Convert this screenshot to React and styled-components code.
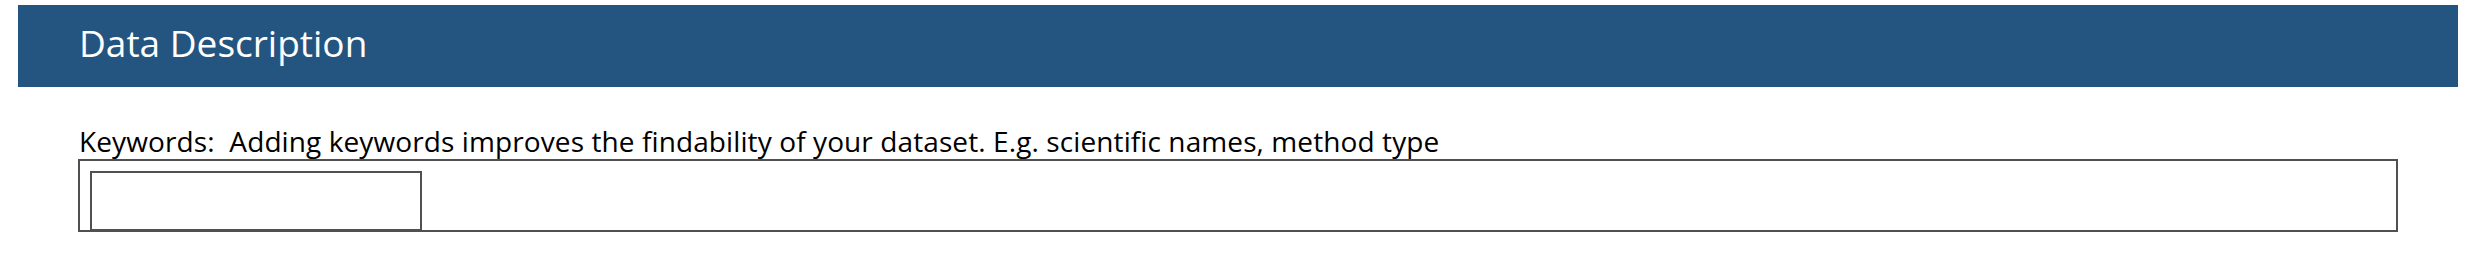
import React from "react";
import styled, { createGlobalStyle } from "styled-components";

const Global = createGlobalStyle`
  html, body { margin: 0; padding: 0; background: #ffffff; }
  body { font-family: "Open Sans", "Noto Sans", sans-serif; }
`;

const Page = styled.div`
  padding: 5px 26px 0 18px;
`;

const SectionHeader = styled.div`
  height: 82px;
  background: #245580;
  display: flex;
  align-items: center;
  padding: 0 0 7px 61px;
  box-sizing: border-box;
`;

const SectionTitle = styled.h2`
  margin: 0;
  font-family: "Open Sans", sans-serif;
  font-weight: 400;
  font-size: 37px;
  color: #ffffff;
  line-height: 1;
`;

const SectionBody = styled.div`
  padding: 0 60px;
`;

const FieldLabel = styled.label`
  display: block;
  margin-top: 36px;
  padding-left: 1px;
  font-family: "Open Sans", sans-serif;
  font-size: 28px;
  line-height: 36px;
  color: #000000;
  letter-spacing: 0.1px;
  white-space: pre;
`;

const TagBox = styled.div`
  height: 73px;
  box-sizing: border-box;
  border: 2px solid #505050;
  display: flex;
  align-items: flex-start;
  padding: 10px 0 0 10px;
`;

const TagInput = styled.input`
  width: 332px;
  height: 61px;
  box-sizing: border-box;
  border: 2px solid #505050;
  border-bottom-width: 3px;
  margin: 0;
  padding: 0 8px;
  font-family: "Open Sans", sans-serif;
  font-size: 24px;
  background: #ffffff;
  outline: none;
`;

export default function App() {
  return (
    <>
      <Global />
      <Page>
        <SectionHeader>
          <SectionTitle>Data Description</SectionTitle>
        </SectionHeader>
        <SectionBody>
          <FieldLabel htmlFor="kw">
            {"Keywords:  Adding keywords improves the findability of your dataset. E.g. scientific names, method type"}
          </FieldLabel>
          <TagBox>
            <TagInput id="kw" type="text" />
          </TagBox>
        </SectionBody>
      </Page>
    </>
  );
}
